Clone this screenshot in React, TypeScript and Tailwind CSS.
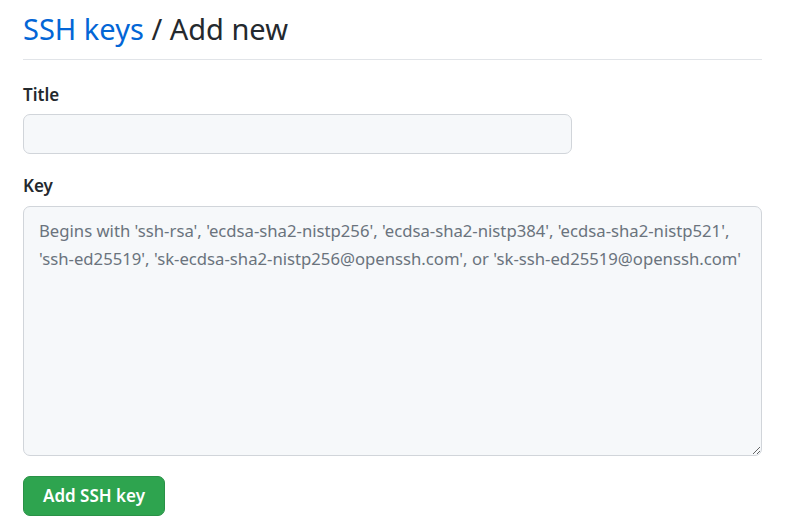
export default function App() {
  return (
    <div
      className="min-h-screen bg-white text-[#24292e]"
      style={{ fontFamily: '"Noto Sans", "Segoe UI", sans-serif' }}
    >
      <div className="ml-[23px] w-[739px]">
        <h2 className="pt-[11px] pb-[12px] text-[29px] leading-[36px] font-normal border-b border-[#e1e4e8]">
          <a href="#" className="text-[#0366d6]">
            SSH keys
          </a>{" "}
          / Add new
        </h2>

        <form className="mt-[22px]">
          <label className="block text-[17px] font-semibold leading-[26px]">Title</label>
          <input
            type="text"
            className="mt-[6px] block w-[549px] h-[40px] px-[10px] text-[17px] bg-[#f6f8fa] border border-[#d1d5da] rounded-[7px] outline-none"
          />

          <label className="mt-[19px] block text-[17px] font-semibold leading-[26px]">Key</label>
          <textarea
            placeholder="Begins with 'ssh-rsa', 'ecdsa-sha2-nistp256', 'ecdsa-sha2-nistp384', 'ecdsa-sha2-nistp521', 'ssh-ed25519', 'sk-ecdsa-sha2-nistp256@openssh.com', or 'sk-ssh-ed25519@openssh.com'"
            className="mt-[7px] block w-[739px] h-[250px] px-[15px] py-[10px] text-[16.7px] leading-[28px] bg-[#f6f8fa] border border-[#d1d5da] rounded-[7px] outline-none placeholder:text-[#6a737d]"
          />

          <button
            type="button"
            className="mt-[20px] w-[142px] h-[40px] rounded-[7px] bg-[#2ea44f] border border-[#2a9147] text-white text-[17px] font-semibold"
          >
            Add SSH key
          </button>
        </form>
      </div>
    </div>
  );
}
